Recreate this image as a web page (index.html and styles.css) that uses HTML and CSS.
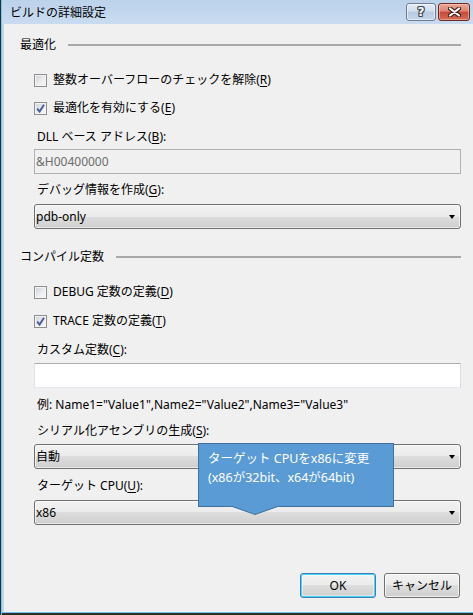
FILE: index.html
```html
<!DOCTYPE html>
<html lang="ja">
<head>
<meta charset="utf-8">
<title>ビルドの詳細設定</title>
<link rel="stylesheet" href="styles.css">
</head>
<body>
<div class="window">
  <div class="titlebar">
    <span class="title">ビルドの詳細設定</span>
    <div class="caption">
      <div class="cap help"><span class="q">?</span></div>
      <div class="cap close">
        <svg width="13" height="10" viewBox="0 0 13 10">
          <path d="M2 1.5 L11 8.5 M11 1.5 L2 8.5" stroke="#3b1c18" stroke-width="4.2" stroke-linecap="round" fill="none"/>
          <path d="M2 1.5 L11 8.5 M11 1.5 L2 8.5" stroke="#ffffff" stroke-width="2.2" stroke-linecap="round" fill="none"/>
        </svg>
      </div>
    </div>
  </div>

  <div class="client">
    <div class="section sec-opt"><span>最適化</span><span class="rule"></span></div>

    <div class="check cb-overflow"><span class="box"></span><span>整数オーバーフローのチェックを解除(<u>R</u>)</span></div>
    <div class="check cb-optimize"><span class="box checked"><svg width="9" height="9" viewBox="0 0 9 9"><path d="M1.2 4.6 L3.6 7.6 L8 0.8" stroke="#4a5b9c" stroke-width="1.9" fill="none"/></svg></span><span>最適化を有効にする(<u>E</u>)</span></div>

    <div class="field-label lbl-dll">DLL ベース アドレス(<u>B</u>):</div>
    <div class="textbox disabled tb-dll">&amp;H00400000</div>

    <div class="field-label lbl-debug">デバッグ情報を作成(<u>G</u>):</div>
    <div class="combo cmb-debug"><span>pdb-only</span><span class="arrow"></span></div>

    <div class="section sec-const"><span>コンパイル定数</span><span class="rule"></span></div>

    <div class="check cb-debug"><span class="box"></span><span>DEBUG 定数の定義(<u>D</u>)</span></div>
    <div class="check cb-trace"><span class="box checked"><svg width="9" height="9" viewBox="0 0 9 9"><path d="M1.2 4.6 L3.6 7.6 L8 0.8" stroke="#4a5b9c" stroke-width="1.9" fill="none"/></svg></span><span>TRACE 定数の定義(<u>T</u>)</span></div>

    <div class="field-label lbl-custom">カスタム定数(<u>C</u>):</div>
    <div class="textbox tb-custom"></div>
    <div class="field-label lbl-example">例: Name1="Value1",Name2="Value2",Name3="Value3"</div>

    <div class="field-label lbl-serial">シリアル化アセンブリの生成(<u>S</u>):</div>
    <div class="combo cmb-serial"><span>自動</span><span class="arrow"></span></div>

    <div class="field-label lbl-cpu">ターゲット CPU(<u>U</u>):</div>
    <div class="combo cmb-cpu"><span>x86</span><span class="arrow"></span></div>

    <div class="buttons">
      <div class="btn default">OK</div>
      <div class="btn">キャンセル</div>
    </div>
  </div>

  <div class="callout">
    <div class="callout-text">ターゲット CPUをx86に変更<br>(x86が32bit、x64が64bit)</div>
    <svg class="callout-tail" width="50" height="10" viewBox="0 0 50 10">
      <polygon points="0,0 25,8.5 50,0" fill="#5b9bd5"/>
      <polyline points="1,0 25,8.5 49,0" fill="none" stroke="#41719c" stroke-width="1"/>
    </svg>
  </div>
</div>
</body>
</html>
```

FILE: styles.css
```css
html, body {
  margin: 0;
  padding: 0;
  background: #f0f0f0;
}

body {
  font-family: "Noto Sans", "Noto Sans CJK JP", sans-serif;
  font-size: 12px;
  color: #000;
}

u {
  text-decoration: underline;
  text-underline-offset: 2px;
}

.window {
  position: relative;
  width: 473px;
  height: 615px;
  box-sizing: border-box;
  padding: 0 0 3px 4px;
  display: flex;
  flex-direction: column;
  background: linear-gradient(#bcd2eb, #c8dbf0 24px, #c2d7ee 24px);
  box-shadow:
    inset 1px 0 #2d2d2d,
    inset 2px 0 #6cc8ee,
    inset 0 -2px #2d2d2d,
    inset 0 -3px #6cc8ee;
  overflow: hidden;
}

/* ---------- title bar ---------- */
.titlebar {
  height: 24px;
  flex: none;
  display: flex;
  align-items: flex-start;
  padding-left: 6px;
}

.title {
  line-height: 26px;
  font-size: 12px;
  color: #000;
}

.caption {
  margin-left: auto;
  margin-top: 3px;
  margin-right: 3px;
  display: flex;
  gap: 2px;
}

.cap {
  height: 18px;
  box-sizing: border-box;
  border-radius: 3px;
  display: flex;
  align-items: center;
  justify-content: center;
}

.cap.help {
  width: 30px;
  border: 1px solid #6e7f95;
  background: linear-gradient(#e3ebf5, #d2deed 45%, #b9cbe2 50%, #c6d6ea);
  box-shadow: inset 0 0 0 1px rgba(255, 255, 255, 0.55);
}

.cap.help .q {
  font-family: "DejaVu Sans", sans-serif;
  font-weight: bold;
  font-size: 12px;
  line-height: 14px;
  color: #fff;
  text-shadow:
    1px 0 #3f4a58, -1px 0 #3f4a58, 0 1px #3f4a58, 0 -1px #3f4a58,
    1px 1px #3f4a58, -1px -1px #3f4a58, 1px -1px #3f4a58, -1px 1px #3f4a58;
}

.cap.close {
  width: 32px;
  border: 1px solid #6b2a22;
  background: linear-gradient(#eaa597, #dc8674 45%, #c74a36 50%, #d46c56);
  box-shadow: inset 0 0 0 1px rgba(255, 220, 210, 0.45);
}

/* ---------- client area ---------- */
.client {
  flex: 1;
  background: #f0f0f0;
  padding: 0 12px 0 16px;
  display: flex;
  flex-direction: column;
}

.section {
  height: 20px;
  line-height: 20px;
  display: flex;
  align-items: center;
  gap: 12px;
}

.section .rule {
  flex: 1;
  height: 2px;
  background: #a8a8a8;
}

.sec-opt { margin-top: 11px; }
.sec-const { margin-top: 18px; }

.check {
  height: 20px;
  line-height: 20px;
  margin-left: 14px;
  display: flex;
  align-items: center;
  gap: 6px;
}

.box {
  width: 13px;
  height: 13px;
  box-sizing: border-box;
  border: 1px solid #8e8f8f;
  background: linear-gradient(135deg, #cdd0d6, #eeeff1 60%, #f8f8f8);
  box-shadow: inset 0 0 0 1px #f4f4f4;
  display: flex;
  align-items: center;
  justify-content: center;
  flex: none;
}

.box svg {
  display: block;
}

.cb-overflow { margin-top: 15px; }
.cb-optimize { margin-top: 8px; }
.cb-debug { margin-top: 15px; }
.cb-trace { margin-top: 9px; }

.field-label {
  height: 20px;
  line-height: 20px;
  margin-left: 17px;
  white-space: nowrap;
}

.lbl-dll { margin-top: 9px; }
.lbl-debug { margin-top: 6px; }
.lbl-custom { margin-top: 9px; }
.lbl-example { margin-top: 7px; }
.lbl-serial { margin-top: 6px; }
.lbl-cpu { margin-top: 7px; }

.textbox {
  margin-left: 14px;
  height: 25px;
  box-sizing: border-box;
  border: 1px solid;
  border-color: #abadb3 #dbdfe6 #e3e9ef #e2e3ea;
  background: #fff;
  line-height: 23px;
  padding-left: 1px;
}

.textbox.disabled {
  background: #f0f0f0;
  border-color: #adb2b5;
  color: #6d6d6d;
}

.tb-dll { margin-top: 2px; }
.tb-custom { margin-top: 3px; }

.combo {
  margin-left: 14px;
  height: 25px;
  box-sizing: border-box;
  border: 1px solid #707070;
  border-radius: 3px;
  background: linear-gradient(#f2f2f2, #ebebeb 50%, #dddddd 50%, #cfcfcf);
  box-shadow: inset 0 0 0 1px rgba(255, 255, 255, 0.6);
  display: flex;
  align-items: center;
  justify-content: space-between;
  padding: 0 5px 0 1px;
  line-height: 23px;
}

.combo .arrow {
  width: 0;
  height: 0;
  border-left: 3.5px solid transparent;
  border-right: 3.5px solid transparent;
  border-top: 4px solid #000;
  margin-top: 1px;
}

.cmb-debug { margin-top: 4px; }
.cmb-serial { margin-top: 3px; }
.cmb-cpu { margin-top: 4px; }

/* ---------- buttons ---------- */
.buttons {
  margin-top: 48px;
  display: flex;
  justify-content: flex-end;
  gap: 8px;
  padding-right: 1px;
}

.btn {
  width: 76px;
  height: 25px;
  box-sizing: border-box;
  border: 1px solid #707070;
  border-radius: 3px;
  background: linear-gradient(#f2f2f2, #ebebeb 50%, #dddddd 50%, #cfcfcf);
  box-shadow: inset 0 0 0 1px rgba(255, 255, 255, 0.7);
  display: flex;
  align-items: center;
  justify-content: center;
  line-height: 23px;
}

.btn.default {
  border-color: #3c7fb1;
  box-shadow: inset 0 0 0 1px #48d5fd, inset 0 0 0 2px rgba(255, 255, 255, 0.4);
}

/* ---------- callout overlay ---------- */
.callout {
  position: absolute;
  left: 198px;
  top: 443px;
  width: 196px;
  height: 64px;
  box-sizing: border-box;
  background: #5b9bd5;
  border: 1px solid #41719c;
}

.callout-text {
  color: #fff;
  font-size: 12.5px;
  line-height: 19px;
  padding: 5px 0 0 9px;
  white-space: nowrap;
}

.callout-tail {
  position: absolute;
  left: 31px;
  top: 62px;
  display: block;
}
```
